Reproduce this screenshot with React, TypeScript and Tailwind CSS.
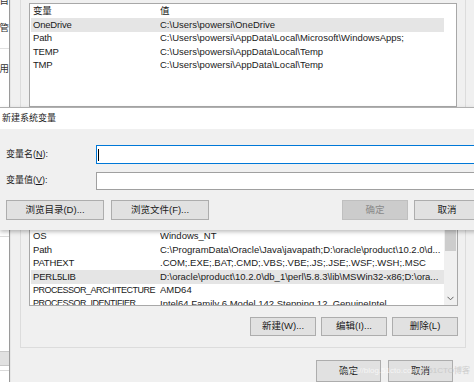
import React from "react";

const FONT = { fontFamily: "'Liberation Sans', 'Noto Sans CJK SC', sans-serif" };

function Btn({ label, w, h = "h-[20px]", disabled = false }: { label: string; w: string; h?: string; disabled?: boolean }) {
  return (
    <div
      className={`${w} ${h} flex items-center justify-center border text-[9.5px] ${
        disabled ? "bg-[#cccccc] border-[#bfbfbf] text-[#8a8a8a]" : "bg-[#e1e1e1] border-[#adadad] text-[#1a1a1a]"
      }`}
    >
      {label}
    </div>
  );
}

function Row({ name, value, hl = false, header = false, tight = false }: { name: string; value: string; hl?: boolean; header?: boolean; tight?: boolean }) {
  return (
    <div className={`flex items-center whitespace-nowrap overflow-hidden ${header ? "h-[14px]" : "h-[13.5px]"} ${hl ? "bg-[#e5e5e5]" : ""}`}>
      <div className={`w-[129px] shrink-0 pl-[2px] overflow-hidden ${tight ? "text-[9px] tracking-[-0.5px]" : "tracking-[-0.2px]"}`}>{name}</div>
      <div className="flex-1 overflow-hidden">{value}</div>
    </div>
  );
}

export default function App() {
  const userVars = [
    ["OneDrive", "C:\\Users\\powersi\\OneDrive"],
    ["Path", "C:\\Users\\powersi\\AppData\\Local\\Microsoft\\WindowsApps;"],
    ["TEMP", "C:\\Users\\powersi\\AppData\\Local\\Temp"],
    ["TMP", "C:\\Users\\powersi\\AppData\\Local\\Temp"],
  ];
  const sysVars = [
    ["NUMBER_OF_PROCESSORS", "8"],
    ["OS", "Windows_NT"],
    ["Path", "C:\\ProgramData\\Oracle\\Java\\javapath;D:\\oracle\\product\\10.2.0\\d..."],
    ["PATHEXT", ".COM;.EXE;.BAT;.CMD;.VBS;.VBE;.JS;.JSE;.WSF;.WSH;.MSC"],
    ["PERL5LIB", "D:\\oracle\\product\\10.2.0\\db_1\\perl\\5.8.3\\lib\\MSWin32-x86;D:\\ora..."],
    ["PROCESSOR_ARCHITECTURE", "AMD64"],
    ["PROCESSOR_IDENTIFIER", "Intel64 Family 6 Model 142 Stepping 12, GenuineIntel"],
  ];

  return (
    <div className="relative w-[474px] h-[382px] overflow-hidden bg-[#f0f0f0] flex text-[#1a1a1a] text-[9.5px]" style={FONT}>
      {/* window behind, left edge */}
      <div className="w-[9px] shrink-0 bg-white flex flex-col overflow-hidden text-[9.5px]">
        <div className="h-[8px] flex justify-end items-end whitespace-nowrap text-[#333]">目</div>
        <div className="h-[34px] flex justify-end items-center whitespace-nowrap text-[#333] pt-[6px]">资管</div>
        <div className="h-[1px] bg-[#e0e0e0] mt-[6px]" />
        <div className="h-[30px] flex justify-end items-center whitespace-nowrap text-[#333] pt-[10px]">使用</div>
        <div className="flex-1" />
        <div className="h-[1px] bg-[#dadada]" />
        <div className="h-[114px]" />
        <div className="h-[15px] bg-[#e1e1e1] border-y border-[#c8c8c8]" />
        <div className="h-[4px]" />
        <div className="h-[1px] bg-[#dadada]" />
        <div className="h-[11px]" />
      </div>
      <div className="w-[1px] shrink-0 bg-[#9a9a9a]" />
      <div className="w-[1px] shrink-0 bg-[#e6e6e6]" />

      {/* main background window */}
      <div className="flex-1 flex flex-col">
        {/* user variables group */}
        <div className="ml-[9px] w-[446px] h-[195px] border-x border-b border-[#dcdcdc] pt-[3px] pl-[8px] pr-[8px]">
          <div className="h-[104px] bg-white border border-[#a8a8a8] pl-[1px]">
            <Row header name="变量" value="值" />
            <div className="mr-[12px]">
              {userVars.map(([n, v], i) => (
                <Row key={n} name={n} value={v} hl={i === 0} />
              ))}
            </div>
          </div>
        </div>

        {/* system variables group */}
        <div className="ml-[9px] mt-[8px] w-[446px] border border-[#dcdcdc] pt-[13px] pl-[8px] pr-[7px] pb-[11px]">
          <div className="h-[91px] bg-white border border-[#a8a8a8] flex">
            <div className="flex-1 overflow-hidden pl-[1px]">
              {sysVars.map(([n, v], i) => (
                <Row key={n} name={n} value={v} hl={i === 4} tight={n.length > 15} />
              ))}
            </div>
            <div className="w-[13px] bg-[#f0f0f0] flex flex-col">
              <div className="h-[12px]" />
              <div className="h-[23px] mx-[1px] bg-[#cdcdcd]" />
              <div className="flex-1" />
              <div className="h-[13px] flex items-center justify-center">
                <svg width="7" height="5" viewBox="0 0 7 5">
                  <path d="M0.5 0.8 L3.5 3.8 L6.5 0.8" fill="none" stroke="#606060" strokeWidth="1" />
                </svg>
              </div>
            </div>
          </div>
          <div className="flex justify-end gap-[5px] mt-[11px]">
            <Btn label="新建(W)..." w="w-[66px]" h="h-[19px]" />
            <Btn label="编辑(I)..." w="w-[66px]" h="h-[19px]" />
            <Btn label="删除(L)" w="w-[66px]" h="h-[19px]" />
          </div>
        </div>

        {/* OK / Cancel */}
        <div className="flex gap-[7px] mt-[12px] pl-[305px]">
          <Btn label="确定" w="w-[65px]" h="h-[22px]" />
          <Btn label="取消" w="w-[65px]" h="h-[22px]" />
        </div>
      </div>

      {/* New system variable dialog */}
      <div className="absolute left-0 top-[107px] w-[488px] h-[123px] border-t border-[#b0b0b0] bg-[#f0f0f0] flex flex-col shadow-[0_2px_4px_rgba(0,0,0,0.25)]">
        <div className="h-[21px] bg-white flex items-center pl-[2px] text-[9px] text-[#1a1a1a]">新建系统变量</div>
        <div className="flex-1 flex flex-col pl-[6px] pr-[8px] pt-[16px]">
          <div className="flex items-center">
            <div className="w-[90px] text-[9px]">变量名(<span className="underline">N</span>):</div>
            <div className="flex-1 h-[19px] bg-white border border-[#0078d7] flex items-center pl-[1px]">
              <div className="w-[1px] h-[12px] bg-black" />
            </div>
          </div>
          <div className="flex items-center mt-[8px]">
            <div className="w-[90px] text-[9px]">变量值(<span className="underline">V</span>):</div>
            <div className="flex-1 h-[18px] bg-white border border-[#a0a0a0]" />
          </div>
          <div className="flex items-center mt-[10px]">
            <Btn label="浏览目录(D)..." w="w-[98px]" />
            <div className="ml-[7px]">
              <Btn label="浏览文件(F)..." w="w-[98px]" />
            </div>
            <div className="flex-1" />
            <Btn label="确定" w="w-[66px]" disabled />
            <div className="ml-[6px]">
              <Btn label="取消" w="w-[66px]" />
            </div>
          </div>
        </div>
      </div>

      {/* watermark */}
      <div className="absolute right-[4px] bottom-[5px] text-[8px] text-[#ffffff] opacity-70 whitespace-nowrap">
        https://blog.51cto.com/<span className="text-[#c0c0c0]">@51CTO博客</span>
      </div>
    </div>
  );
}
